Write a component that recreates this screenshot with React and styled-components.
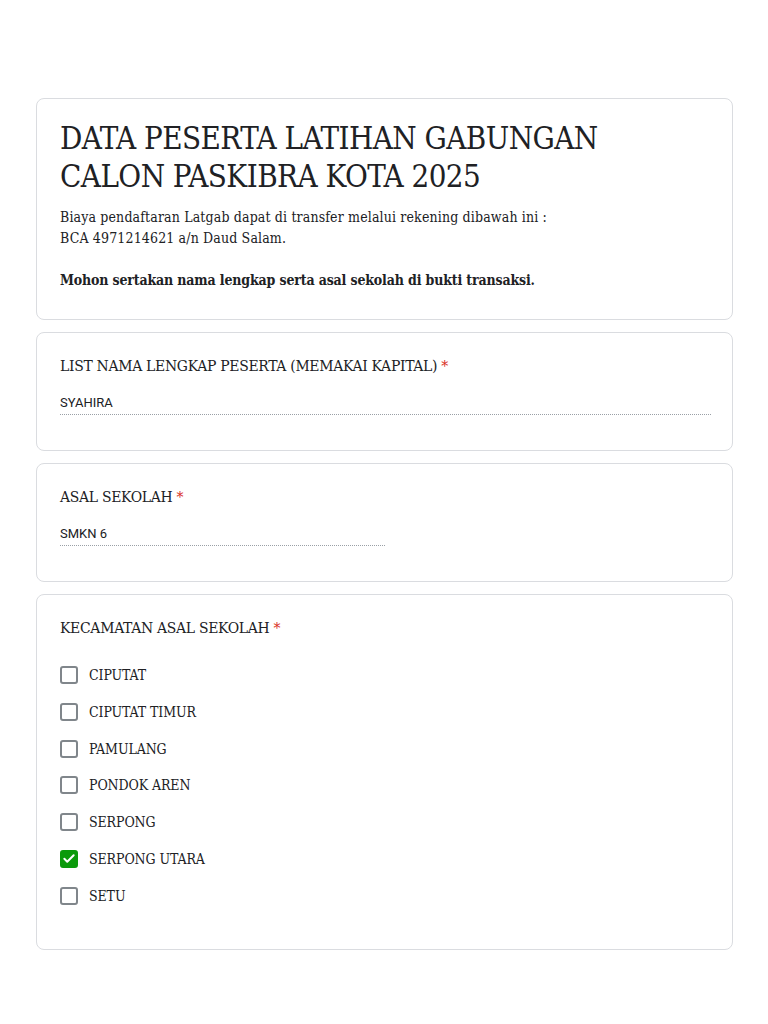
import React from "react";
import styled, { createGlobalStyle } from "styled-components";

const Global = createGlobalStyle`
  html, body { margin: 0; padding: 0; background: #ffffff; }
  body { font-family: "DejaVu Serif Condensed", "DejaVu Serif", serif; color: #202124; }
`;

const Page = styled.div`
  width: 768px;
  min-height: 1024px;
  box-sizing: border-box;
  padding: 98px 35px 40px 36px;
  display: flex;
  flex-direction: column;
  gap: 12px;
`;

const Card = styled.section`
  background: #fff;
  border: 1px solid #dadce0;
  border-radius: 8px;
  box-sizing: border-box;
  padding: ${(p) => p.$pad || "24px 23px 24px 23px"};
  min-height: ${(p) => p.$h || "auto"};
`;

const Title = styled.h1`
  margin: 0;
  font-family: "DejaVu Serif Condensed", "DejaVu Serif", serif;
  font-weight: 400;
  font-size: 31px;
  letter-spacing: -0.55px;
  line-height: 38px;
  color: #202124;
`;

const Desc = styled.div`
  margin-top: 12px;
  font-size: 14px;
  letter-spacing: 0.15px;
  line-height: 21px;
  color: #202124;
`;

const Bold = styled.div`
  margin-top: 21px;
  font-weight: 700;
  letter-spacing: -0.15px;
`;

const Question = styled.div`
  font-size: 15.5px;
  letter-spacing: -0.3px;
  line-height: 24px;
  color: #202124;
`;

const Star = styled.span`
  color: #d93025;
  margin-left: 4px;
`;

const Answer = styled.div`
  margin-top: 15px;
  width: ${(p) => p.$w};
  font-family: Roboto, "Liberation Sans", sans-serif;
  font-size: 13px;
  line-height: 20px;
  color: #202124;
  padding-bottom: 1px;
  border-bottom: 1px dotted #9aa0a6;
`;

const Options = styled.div`
  margin-top: 26px;
  display: flex;
  flex-direction: column;
  gap: 18.8px;
`;

const Option = styled.div`
  display: flex;
  align-items: center;
  gap: 11px;
  height: 18px;
  font-size: 14px;
  letter-spacing: -0.1px;
  color: #202124;
`;

const Box = styled.span`
  width: 18px;
  height: 18px;
  box-sizing: border-box;
  border-radius: 3px;
  border: 2px solid ${(p) => (p.$on ? "#0b9a0b" : "#80868b")};
  background: ${(p) => (p.$on ? "#0b9a0b" : "#fff")};
  display: flex;
  align-items: center;
  justify-content: center;
`;

const options = [
  ["CIPUTAT", false],
  ["CIPUTAT TIMUR", false],
  ["PAMULANG", false],
  ["PONDOK AREN", false],
  ["SERPONG", false],
  ["SERPONG UTARA", true],
  ["SETU", false],
];

export default function App() {
  return (
    <>
      <Global />
      <Page>
        <Card $pad="20px 23px 28px 23px">
          <Title>
            DATA PESERTA LATIHAN GABUNGAN
            <br />
            CALON PASKIBRA KOTA 2025
          </Title>
          <Desc>
            Biaya pendaftaran Latgab dapat di transfer melalui rekening dibawah ini :
            <br />
            BCA 4971214621 a/n Daud Salam.
            <Bold>Mohon sertakan nama lengkap serta asal sekolah di bukti transaksi.</Bold>
          </Desc>
        </Card>
        <Card $pad="21px 23px 24px 23px" $h="119px">
          <Question>
            LIST NAMA LENGKAP PESERTA (MEMAKAI KAPITAL)<Star>*</Star>
          </Question>
          <Answer $w="651px">SYAHIRA</Answer>
        </Card>
        <Card $pad="21px 23px 24px 23px" $h="119px">
          <Question>
            ASAL SEKOLAH<Star>*</Star>
          </Question>
          <Answer $w="325px">SMKN 6</Answer>
        </Card>
        <Card $pad="21px 23px 24px 23px" $h="356px">
          <Question>
            KECAMATAN ASAL SEKOLAH<Star>*</Star>
          </Question>
          <Options>
            {options.map(([label, on]) => (
              <Option key={label}>
                <Box $on={on}>
                  {on && (
                    <svg width="15" height="15" viewBox="0 0 24 24">
                      <path d="M4 12.5l5 5 11-11" fill="none" stroke="#fff" strokeWidth="3.4" strokeLinecap="round" strokeLinejoin="round" />
                    </svg>
                  )}
                </Box>
                {label}
              </Option>
            ))}
          </Options>
        </Card>
      </Page>
    </>
  );
}
